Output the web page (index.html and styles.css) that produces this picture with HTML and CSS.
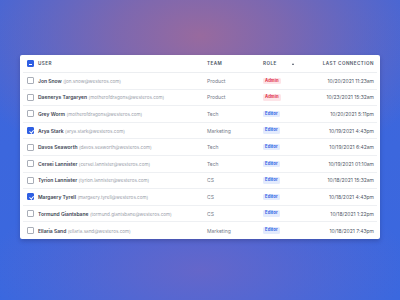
FILE: index.html
```html
<!DOCTYPE html>
<html>
<head>
<meta charset="utf-8">
<link rel="stylesheet" href="styles.css">
</head>
<body>
<div class="stage">
  <div class="card">
    <div class="row head">
      <span class="cb on minus"></span>
      <span class="c-user">User</span>
      <span class="c-team">Team</span>
      <span class="c-role">Role <span class="sort"></span></span>
      <span class="c-date">Last connection</span>
    </div>
    <div class="row"><span class="cb"></span><span class="c-user"><b>Jon Snow</b> <i>(jon.snow@westeros.com)</i></span><span class="c-team">Product</span><span class="c-role"><span class="badge admin">Admin</span></span><span class="c-date">10/20/2021 11:23am</span></div>
    <div class="row"><span class="cb"></span><span class="c-user"><b>Daenerys Targaryen</b> <i>(motherofdragons@westeros.com)</i></span><span class="c-team">Product</span><span class="c-role"><span class="badge admin">Admin</span></span><span class="c-date">10/23/2021 15:32am</span></div>
    <div class="row"><span class="cb"></span><span class="c-user"><b>Grey Worm</b> <i>(motherofdragons@westeros.com)</i></span><span class="c-team">Tech</span><span class="c-role"><span class="badge editor">Editor</span></span><span class="c-date">10/20/2021 5:11pm</span></div>
    <div class="row"><span class="cb on check"></span><span class="c-user"><b>Arya Stark</b> <i>(arya.stark@westeros.com)</i></span><span class="c-team">Marketing</span><span class="c-role"><span class="badge editor">Editor</span></span><span class="c-date">10/19/2021 4:43pm</span></div>
    <div class="row"><span class="cb"></span><span class="c-user"><b>Davos Seaworth</b> <i>(davos.seaworth@westeros.com)</i></span><span class="c-team">Tech</span><span class="c-role"><span class="badge editor">Editor</span></span><span class="c-date">10/19/2021 6:42am</span></div>
    <div class="row"><span class="cb"></span><span class="c-user"><b>Cersei Lannister</b> <i>(cersei.lannister@westeros.com)</i></span><span class="c-team">Tech</span><span class="c-role"><span class="badge editor">Editor</span></span><span class="c-date">10/19/2021 01:10am</span></div>
    <div class="row"><span class="cb"></span><span class="c-user"><b>Tyrion Lannister</b> <i>(tyrion.lannister@westeros.com)</i></span><span class="c-team">CS</span><span class="c-role"><span class="badge editor">Editor</span></span><span class="c-date">10/18/2021 15:32am</span></div>
    <div class="row"><span class="cb on check"></span><span class="c-user"><b>Margaery Tyrell</b> <i>(margaery.tyrell@westeros.com)</i></span><span class="c-team">CS</span><span class="c-role"><span class="badge editor">Editor</span></span><span class="c-date">10/18/2021 4:43pm</span></div>
    <div class="row"><span class="cb"></span><span class="c-user"><b>Tormund Giantsbane</b> <i>(tormund.giantsbane@westeros.com)</i></span><span class="c-team">CS</span><span class="c-role"><span class="badge editor">Editor</span></span><span class="c-date">10/18/2021 1:22pm</span></div>
    <div class="row last"><span class="cb"></span><span class="c-user"><b>Ellaria Sand</b> <i>(ellaria.sand@westeros.com)</i></span><span class="c-team">Marketing</span><span class="c-role"><span class="badge editor">Editor</span></span><span class="c-date">10/18/2021 7:43pm</span></div>
  </div>
</div>
</body>
</html>
```

FILE: styles.css
```css
html, body {
  margin: 0;
  padding: 0;
}
body {
  width: 400px;
  height: 300px;
  overflow: hidden;
  font-family: Inter, "Noto Sans", sans-serif;
  background:
    radial-gradient(ellipse 240px 150px at 50% 12%, rgba(152,106,158,1) 0%, rgba(140,104,165,0.8) 35%, rgba(110,100,190,0) 100%),
    radial-gradient(ellipse 210px 100px at 50% 90%, rgba(108,102,198,0.85) 0%, rgba(100,100,210,0) 100%),
    linear-gradient(180deg, #3e66db 0%, #3a68df 100%);
}
.stage {
  padding: 55px 20px 0;
}
.card {
  background: #fff;
  border-radius: 2px;
  box-shadow: 0 2px 4px rgba(30, 30, 80, 0.28);
  padding: 0 3px;
}
.row {
  display: grid;
  grid-template-columns: 11px 169px 56px 40px 1fr;
  align-items: center;
  height: 16.6px;
  padding: 0 3px 0 4px;
  border-bottom: 1px solid #eef0f3;
  box-sizing: border-box;
  font-size: 5px;
  color: #737a88;
  white-space: nowrap;
}
.row.last {
  border-bottom: none;
}
.row.head {
  height: 18px;
  border-bottom: 1.5px solid #eceef1;
  font-size: 4.6px;
  font-weight: 600;
  color: #4a5262;
  text-transform: uppercase;
  letter-spacing: 0.45px;
}
.cb {
  width: 7px;
  height: 7px;
  box-sizing: border-box;
  border: 0.8px solid #a9aeb8;
  border-radius: 1px;
  background: #fff;
  position: relative;
}
.cb.on {
  background: #2f5fe3;
  border-color: #2f5fe3;
}
.cb.minus::after {
  content: "";
  position: absolute;
  left: 1.3px;
  right: 1.3px;
  top: 2.6px;
  height: 0.9px;
  background: #fff;
}
.cb.check::after {
  content: "";
  position: absolute;
  left: 2px;
  top: 0.6px;
  width: 1.6px;
  height: 3.4px;
  border-right: 0.9px solid #fff;
  border-bottom: 0.9px solid #fff;
  transform: rotate(40deg);
}
.c-user b {
  font-weight: 600;
  color: #3a4252;
}
.c-user i {
  font-style: normal;
  color: #9aa0aa;
  font-size: 4.6px;
}
.c-role {
  display: flex;
  align-items: center;
}
.sort {
  margin-left: 15px;
  width: 0;
  height: 0;
  border-left: 1.7px solid transparent;
  border-right: 1.7px solid transparent;
  border-bottom: 2px solid #4a5262;
}
.c-date {
  text-align: right;
  color: #505868;
}
.badge {
  display: inline-block;
  font-size: 4.2px;
  font-weight: 700;
  line-height: 6.5px;
  padding: 0 2px;
  border-radius: 1.5px;
  letter-spacing: 0.1px;
}
.badge.admin {
  color: #e0344c;
  background: #fde4e8;
}
.badge.editor {
  color: #2f5fe3;
  background: #e3ebfd;
}
```
